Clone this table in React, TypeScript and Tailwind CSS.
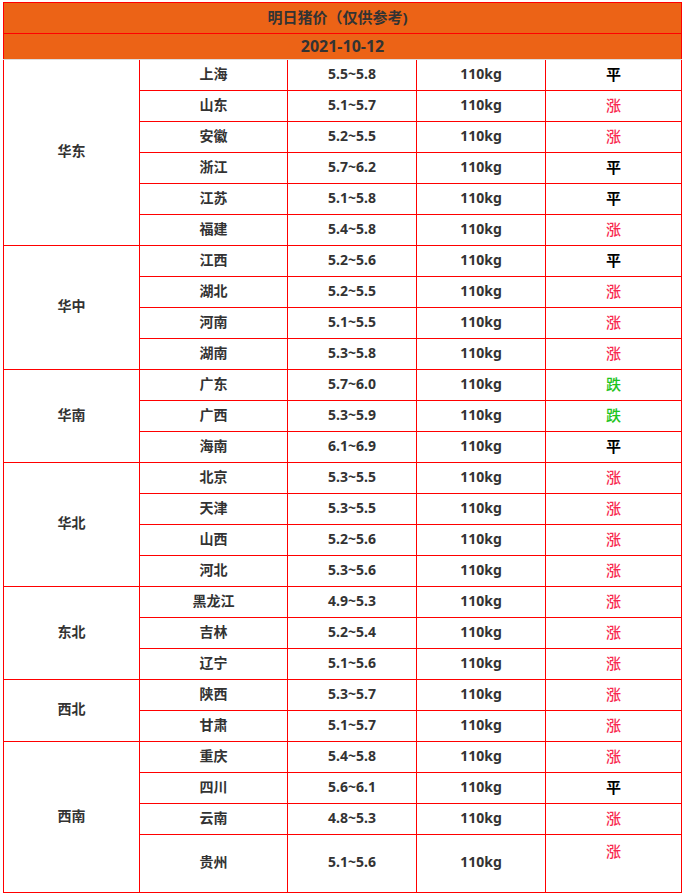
import React from "react"

type Trend = "平" | "涨" | "跌"
type Row = { city: string; price: string; trend: Trend }
type Region = { name: string; rows: Row[] }

const regions: Region[] = [
  {
    name: "华东",
    rows: [
      { city: "上海", price: "5.5~5.8", trend: "平" },
      { city: "山东", price: "5.1~5.7", trend: "涨" },
      { city: "安徽", price: "5.2~5.5", trend: "涨" },
      { city: "浙江", price: "5.7~6.2", trend: "平" },
      { city: "江苏", price: "5.1~5.8", trend: "平" },
      { city: "福建", price: "5.4~5.8", trend: "涨" },
    ],
  },
  {
    name: "华中",
    rows: [
      { city: "江西", price: "5.2~5.6", trend: "平" },
      { city: "湖北", price: "5.2~5.5", trend: "涨" },
      { city: "河南", price: "5.1~5.5", trend: "涨" },
      { city: "湖南", price: "5.3~5.8", trend: "涨" },
    ],
  },
  {
    name: "华南",
    rows: [
      { city: "广东", price: "5.7~6.0", trend: "跌" },
      { city: "广西", price: "5.3~5.9", trend: "跌" },
      { city: "海南", price: "6.1~6.9", trend: "平" },
    ],
  },
  {
    name: "华北",
    rows: [
      { city: "北京", price: "5.3~5.5", trend: "涨" },
      { city: "天津", price: "5.3~5.5", trend: "涨" },
      { city: "山西", price: "5.2~5.6", trend: "涨" },
      { city: "河北", price: "5.3~5.6", trend: "涨" },
    ],
  },
  {
    name: "东北",
    rows: [
      { city: "黑龙江", price: "4.9~5.3", trend: "涨" },
      { city: "吉林", price: "5.2~5.4", trend: "涨" },
      { city: "辽宁", price: "5.1~5.6", trend: "涨" },
    ],
  },
  {
    name: "西北",
    rows: [
      { city: "陕西", price: "5.3~5.7", trend: "涨" },
      { city: "甘肃", price: "5.1~5.7", trend: "涨" },
    ],
  },
  {
    name: "西南",
    rows: [
      { city: "重庆", price: "5.4~5.8", trend: "涨" },
      { city: "四川", price: "5.6~6.1", trend: "平" },
      { city: "云南", price: "4.8~5.3", trend: "涨" },
      { city: "贵州", price: "5.1~5.6", trend: "涨" },
    ],
  },
]

const trendClass: Record<Trend, string> = {
  "平": "text-black font-bold",
  "涨": "text-[#f8284f] font-medium",
  "跌": "text-[#1ec41e] font-medium",
}

const cell = "border border-[#ff0000] text-center align-middle p-0 pb-[3px]"

export default function App() {
  return (
    <div
      className="w-[683px] bg-white pt-[2px] pl-[3px] text-[#333] font-bold text-[14px] leading-[18px]"
      style={{ fontFamily: '"Noto Sans", "Noto Sans CJK SC", sans-serif' }}
    >
      <table className="w-[678px] table-fixed border-collapse">
        <colgroup>
          <col className="w-[136px]" />
          <col className="w-[148px]" />
          <col className="w-[129px]" />
          <col className="w-[129px]" />
          <col className="w-[136px]" />
        </colgroup>
        <thead>
          <tr className="h-[31px] bg-[#ec6316]">
            <th colSpan={5} className="border border-[#ff0000] pr-[10px] pb-[2px] text-[15px] font-bold text-[#333] text-center">
              明日猪价（仅供参考)
            </th>
          </tr>
          <tr className="h-[26px] bg-[#ec6316]">
            <th
              colSpan={5}
              className="border-x border-x-[#ff0000] border-b border-b-[#dddddd] pb-[2px] text-[16px] font-bold text-[#333] text-center"
            >
              2021-10-12
            </th>
          </tr>
        </thead>
        <tbody>
          {regions.map((region) =>
            region.rows.map((row, i) => {
              const last = row.city === "贵州"
              return (
                <tr key={row.city} className={last ? "h-[58px]" : "h-[31px]"}>
                  {i === 0 && (
                    <td rowSpan={region.rows.length} className={cell}>
                      {region.name}
                    </td>
                  )}
                  <td className={cell}>{row.city}</td>
                  <td className={cell}>{row.price}</td>
                  <td className={cell}>110kg</td>
                  <td className={`${cell} text-[15px] ${trendClass[row.trend]} ${last ? "pb-[26px]" : ""}`}>
                    {row.trend}
                  </td>
                </tr>
              )
            })
          )}
        </tbody>
      </table>
    </div>
  )
}
